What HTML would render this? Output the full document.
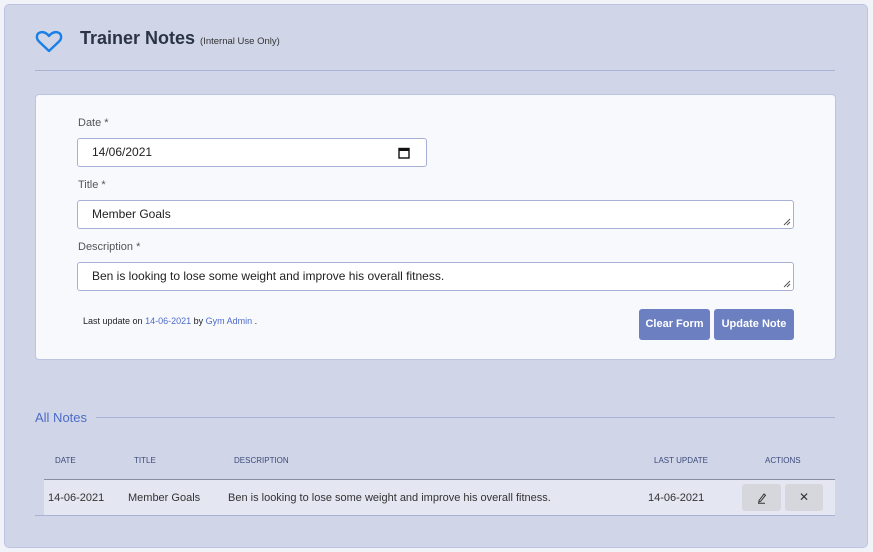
<!DOCTYPE html>
<html><head><style>
*{box-sizing:border-box;margin:0;padding:0}
body{width:873px;height:552px;background:#f2f3f8;font-family:"Liberation Sans",sans-serif;position:relative;overflow:hidden;color:#333}
.panel{position:absolute;left:4px;top:4px;width:864px;height:544px;background:#d0d5e8;border:1px solid #bcc4e2;border-radius:5px}
.abs{position:absolute}
.hline{position:absolute;height:1px;background:#aab2d3}
.card{position:absolute;left:35px;top:94px;width:801px;height:266px;background:#f8f9fd;border:1px solid #bcc4e2;border-radius:4px}
.lbl{position:absolute;font-size:11px;color:#555}
.inp{position:absolute;background:#fff;border:1px solid #a9b0d8;border-radius:3px;font-size:12px;color:#222;padding-left:14px;line-height:27px}
.btn{position:absolute;background:#6c7fc1;color:#fff;font-size:11px;font-weight:bold;border-radius:3px;text-align:center;line-height:30px}
.th{position:absolute;top:456px;font-size:8px;color:#3b4a7a}
.td{position:absolute;top:492px;font-size:11px;color:#333}
.ab{position:absolute;top:484px;height:27px;background:#d6d7dd;border-radius:3px;text-align:center;line-height:27px;color:#333;font-size:12px}
.grip{position:absolute;right:2px;bottom:2px}
a{color:#4d6cc8;text-decoration:none}
</style></head><body>
<div class="panel"></div>
<svg class="abs" style="left:35px;top:30px" width="28" height="24" viewBox="0 0 28 24"><path d="M14 21 L4 11.5 C0.5 8 1.5 3 6 2.2 C9.5 1.7 12 3.5 14 6 C16 3.5 18.5 1.7 22 2.2 C26.5 3 27.5 8 24 11.5 Z" fill="none" stroke="#1a7fe6" stroke-width="2.4" stroke-linejoin="round"/></svg>
<div class="abs" style="left:80px;top:28px;font-size:18px;font-weight:bold;color:#2a3445">Trainer Notes <span style="font-size:9.5px;font-weight:normal;color:#333">(Internal Use Only)</span></div>
<div class="hline" style="left:35px;top:70px;width:800px"></div>
<div class="card"></div>
<div class="lbl" style="left:78px;top:117px">Date *</div>
<div class="inp" style="left:77px;top:138px;width:350px;height:29px">14/06/2021
<svg class="abs" style="left:320px;top:8px" width="12" height="12" viewBox="0 0 12 12"><rect x="1" y="1.5" width="10" height="9.5" fill="none" stroke="#111" stroke-width="1.4"/><rect x="1" y="1.5" width="10" height="2.5" fill="#111"/></svg></div>
<div class="lbl" style="left:78px;top:179px">Title *</div>
<div class="inp" style="left:77px;top:200px;width:717px;height:29px">Member Goals<svg class="grip" width="8" height="8" viewBox="0 0 8 8"><path d="M1 7 L7 1 M4 7 L7 4" stroke="#555" stroke-width="1"/></svg></div>
<div class="lbl" style="left:78px;top:241px">Description *</div>
<div class="inp" style="left:77px;top:262px;width:717px;height:29px">Ben is looking to lose some weight and improve his overall fitness.<svg class="grip" width="8" height="8" viewBox="0 0 8 8"><path d="M1 7 L7 1 M4 7 L7 4" stroke="#555" stroke-width="1"/></svg></div>
<div class="abs" style="left:83px;top:316px;font-size:9px;color:#222">Last update on <a>14-06-2021</a> by <a>Gym Admin</a> .</div>
<div class="btn" style="left:639px;top:309px;width:71px;height:31px">Clear Form</div>
<div class="btn" style="left:714px;top:309px;width:80px;height:31px">Update Note</div>
<div class="abs" style="left:35px;top:410px;font-size:13px;color:#4d6cc8">All Notes</div>
<div class="hline" style="left:96px;top:417px;width:739px"></div>
<div class="th" style="left:55px">DATE</div>
<div class="th" style="left:134px">TITLE</div>
<div class="th" style="left:234px">DESCRIPTION</div>
<div class="th" style="left:654px">LAST UPDATE</div>
<div class="th" style="left:765px">ACTIONS</div>
<div class="abs" style="left:44px;top:479px;width:791px;height:36px;background:#e4e6f2;border-top:1px solid #8a8fa0"></div>
<div class="hline" style="left:35px;top:515px;width:800px"></div>
<div class="td" style="left:48px">14-06-2021</div>
<div class="td" style="left:128px">Member Goals</div>
<div class="td" style="left:228px">Ben is looking to lose some weight and improve his overall fitness.</div>
<div class="td" style="left:648px">14-06-2021</div>
<div class="ab" style="left:742px;width:39px"><svg width="12" height="12" viewBox="0 0 12 12" style="vertical-align:middle"><path d="M3 8.5 L8 2 L9.5 3.2 L4.5 9.5 L2.8 10 Z M2 11.2 H9" fill="none" stroke="#333" stroke-width="1"/></svg></div>
<div class="ab" style="left:785px;width:38px">✕</div>
</body></html>
